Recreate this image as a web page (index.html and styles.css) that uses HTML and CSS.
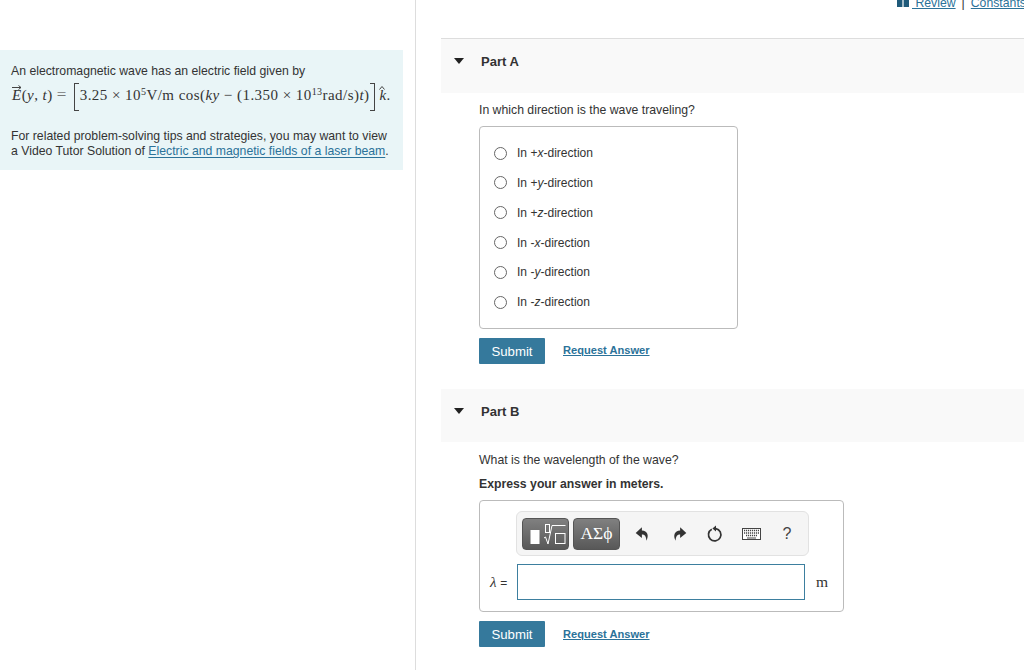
FILE: index.html
```html
<!DOCTYPE html>
<html lang="en">
<head>
    <meta charset="UTF-8">
    <title>Electromagnetic Wave</title>
    <link rel="stylesheet" href="styles.css">
</head>
<body>
    <div class="page">
        <aside class="intro">
            <div class="intro-box">
                <p class="intro-line">An electromagnetic wave has an electric field given by</p>
                <p class="formula"><span class="vec"><i>E</i><svg class="vec-arrow" width="10" height="5" viewBox="0 0 10 5" fill="none" stroke="#444"><path d="M0 2.500h9M6.500 .5L9 2.500 6.500 4.500"/></svg></span>(<i>y</i>, <i>t</i>)<span class="eq">=</span><span class="bracket bracket-left"></span>3.25 &times; 10<sup>5</sup>V/m cos(<i>ky</i> &minus; (1.350 &times; 10<sup>13</sup>rad/s)<i>t</i>)<span class="bracket bracket-right"></span><span class="vec"><i>k</i><svg class="vec-hat" width="6" height="4" viewBox="0 0 6 4" fill="none" stroke="#444"><path d="M.5 3.500L3 .5l2.500 3"/></svg></span>.</p>
                <p class="intro-tip">For related problem-solving tips and strategies, you may want to view<br>a Video Tutor Solution of <a href="#">Electric and magnetic fields of a laser beam</a>.</p>
            </div>
        </aside>
        <main class="questions">
            <div class="top-links">
                <svg class="book" width="12" height="7" viewBox="0 0 12 7"><path d="M0 0h5.400v7H0zM6.600 0H12v7H6.600z"/></svg>
                <a class="review" href="#">&nbsp;Review</a><span class="sep">|</span><a href="#">Constants</a>
            </div>

            <section class="part part-a">
                <div class="part-head">
                    <span class="caret"></span>
                    <h2>Part A</h2>
                </div>
                <div class="part-body">
                    <p class="question">In which direction is the wave traveling?</p>
                    <div class="choices">
                        <label class="choice"><span class="radio"></span>In +<i>x</i>-direction</label>
                        <label class="choice"><span class="radio"></span>In +<i>y</i>-direction</label>
                        <label class="choice"><span class="radio"></span>In +<i>z</i>-direction</label>
                        <label class="choice"><span class="radio"></span>In -<i>x</i>-direction</label>
                        <label class="choice"><span class="radio"></span>In -<i>y</i>-direction</label>
                        <label class="choice"><span class="radio"></span>In -<i>z</i>-direction</label>
                    </div>
                    <div class="actions">
                        <button class="submit">Submit</button>
                        <a class="request" href="#">Request Answer</a>
                    </div>
                </div>
            </section>

            <section class="part part-b">
                <div class="part-head">
                    <span class="caret"></span>
                    <h2>Part B</h2>
                </div>
                <div class="part-body">
                    <p class="question">What is the wavelength of the wave?</p>
                    <p class="instruction">Express your answer in meters.</p>
                    <div class="answer">
                        <div class="toolbar">
                            <button class="tool-btn">
                                <svg width="40" height="26" viewBox="0 0 40 26" fill="none" stroke="#fff">
                                    <rect x="4.500" y="9" width="9" height="14" fill="#fff" stroke="none"/>
                                    <rect x="19.500" y="3.500" width="4" height="8"/>
                                    <path d="M18 17l1.500 -1 2.500 7 4 -18.500h13.500"/>
                                    <rect x="29.500" y="12.500" width="9.500" height="10"/>
                                </svg>
                            </button>
                            <button class="tool-btn tool-greek">&Alpha;&Sigma;&#981;</button>
                            <div class="tool-icons">
                                <svg width="18" height="18" viewBox="0 0 16 16"><path d="M7 2L1.500 7 7 11.500V8.500c2.500 0 3.800 1.300 4 5.500 2.500-5 1-9-4-9.200z"/></svg>
                                <svg class="flip" width="18" height="18" viewBox="0 0 16 16"><path d="M7 2L1.500 7 7 11.500V8.500c2.500 0 3.800 1.300 4 5.500 2.500-5 1-9-4-9.200z"/></svg>
                                <svg width="18" height="18" viewBox="0 0 18 18"><path d="M5.800 4.200a6.200 6.200 0 1 0 4 -.6" fill="none" stroke="#333" stroke-width="1.700"/><path d="M10 .4L6.400 3.500 10 6.600z"/></svg>
                                <svg width="19" height="12" viewBox="0 0 19 12"><rect x=".5" y=".5" width="18" height="11" fill="#fff" stroke="#444"/><path d="M2 2.500h15M2 5h15M4 7.500h11" stroke="#444" stroke-width="1.500" stroke-dasharray="1.200 .8"/><path d="M5 10h9" stroke="#444"/></svg>
                                <span class="help">?</span>
                            </div>
                        </div>
                        <div class="answer-row">
                            <span class="answer-label"><i>&lambda;</i> <span>=</span></span>
                            <input class="answer-input" type="text">
                            <span class="answer-unit">m</span>
                        </div>
                    </div>
                    <div class="actions">
                        <button class="submit">Submit</button>
                        <a class="request" href="#">Request Answer</a>
                    </div>
                </div>
            </section>
        </main>
    </div>
</body>
</html>
```

FILE: styles.css
```css
* {
    box-sizing: border-box;
}
html, body {
    margin: 0;
    height: 100%;
    overflow: hidden;
}
body {
    font-family: "Liberation Sans", Arial, sans-serif;
    font-size: 12.25px;
    color: #333;
    background-color: white;
}
p {
    margin: 0;
}
a {
    color: #2b7299;
}
.page {
    display: flex;
    height: 670px;
}
.intro {
    width: 416px;
    flex-shrink: 0;
    border-right: 1px solid #ddd;
    padding-top: 50px;
}
.intro-box {
    width: 403px;
    height: 120px;
    background-color: #e9f5f7;
    padding: 13px 0 0 11px;
}
.intro-line {
    line-height: 15px;
    padding-top: 1px;
}
.formula {
    font-family: "Liberation Serif", serif;
    font-size: 15px;
    letter-spacing: .45px;
    line-height: 26px;
    margin-top: 3px;
    height: 26px;
    white-space: nowrap;
}
.formula sup {
    font-size: 10px;
    line-height: 0;
    vertical-align: 5px;
}
.eq {
    color: #777;
    font-size: 17px;
    margin: 0 7px 0 4px;
}
.vec {
    position: relative;
    display: inline-block;
    padding-left: 1px;
}
.vec-arrow {
    position: absolute;
    left: 1px;
    top: 3px;
}
.vec-hat {
    position: absolute;
    left: 1px;
    top: 4px;
}
.bracket {
    width: 5px;
    height: 28px;
    border: 1px solid #444;
    display: inline-block;
    vertical-align: middle;
}
.bracket-left {
    border-right: none;
    margin: 0 1px 0 0;
}
.bracket-right {
    border-left: none;
    margin: 0 3px 0 1px;
}
.intro-tip {
    line-height: 15px;
    margin-top: 21px;
}
.intro-tip a {
    text-underline-offset: 2px;
}
.questions {
    flex: 1;
    min-width: 0;
    padding-left: 25px;
}
.top-links {
    height: 38px;
    display: flex;
    align-items: flex-start;
    margin-top: -4px;
    margin-bottom: 4px;
    padding-left: 456px;
    white-space: nowrap;
    line-height: 15px;
    color: #2b7299;
}
.top-links > * {
    flex-shrink: 0;
}
.book {
    fill: #1f5a7a;
    margin-top: 4px;
}
.review {
    margin-left: 3px;
}
.sep {
    color: #333;
    margin: 0 6px;
}
.part-head {
    display: flex;
    align-items: flex-start;
    background-color: #f9f9f9;
    padding: 15px 0 0 13px;
}
.part-a .part-head {
    height: 55px;
    border-top: 1px solid #ddd;
}
.part-b .part-head {
    height: 53px;
}
.caret {
    width: 0;
    height: 0;
    margin-top: 4px;
    border-left: 5.500px solid transparent;
    border-right: 5.500px solid transparent;
    border-top: 6px solid #222;
}
h2 {
    font-size: 13px;
    font-weight: bold;
    line-height: 15px;
    margin: 0 0 0 17px;
}
.part-body {
    padding-left: 38px;
}
.question {
    line-height: 15px;
    padding-top: 10px;
}
.part-a .question {
    height: 24px;
}
.part-b .question {
    padding-top: 11px;
}
.choices {
    width: 259px;
    height: 203px;
    margin-top: 9px;
    padding-top: 11.300px;
    border: 1px solid #bbb;
    border-radius: 4px;
}
.choice {
    display: flex;
    align-items: center;
    height: 29.800px;
    padding-left: 14px;
    font-size: 12.050px;
}
.radio {
    width: 13px;
    height: 13px;
    margin-right: 10px;
    border: 1px solid #666;
    border-radius: 50%;
    background-color: white;
}
.actions {
    display: flex;
    align-items: center;
    margin-top: 9px;
}
.submit {
    width: 66px;
    height: 26px;
    padding: 0;
    border: none;
    border-radius: 1px;
    background-color: #35799c;
    color: white;
    font-family: inherit;
    font-size: 13.200px;
}
.request {
    margin-left: 18px;
    margin-top: -2px;
    font-size: 11.100px;
    font-weight: bold;
}
.part-b .request {
    margin-top: 0;
}
.part-a .actions {
    margin-bottom: 25px;
}
.instruction {
    font-weight: bold;
    line-height: 15px;
    margin-top: 9px;
}
.answer {
    width: 365px;
    height: 112px;
    margin-top: 8px;
    padding: 10px 0 0 36px;
    border: 1px solid #bbb;
    border-radius: 4px;
}
.toolbar {
    display: flex;
    align-items: center;
    width: 293px;
    height: 45px;
    padding-left: 5px;
    background-color: #f5f5f5;
    border: 1px solid #e2e2e2;
    border-radius: 6px;
}
.tool-btn {
    width: 47px;
    height: 32px;
    margin-right: 4px;
    padding: 0;
    display: flex;
    align-items: center;
    justify-content: center;
    border: 1px solid #555;
    border-radius: 4px;
    background: linear-gradient(#808080, #585858);
    color: white;
}
.tool-greek {
    font-family: "Liberation Serif", serif;
    font-size: 17.500px;
}
.tool-icons {
    display: grid;
    grid-auto-flow: column;
    grid-auto-columns: 36px;
    justify-items: center;
    align-items: center;
    margin-left: 1px;
    fill: #333;
}
.flip {
    transform: scaleX(-1);
}
.help {
    font-size: 16px;
    color: #444;
}
.answer-row {
    display: flex;
    align-items: center;
    margin: 8px 0 0 -26px;
}
.answer-label {
    width: 27px;
    font-family: "Liberation Serif", serif;
    font-size: 15px;
    white-space: nowrap;
}
.answer-label span {
    font-family: "Liberation Sans", sans-serif;
    font-size: 12px;
}
.answer-input {
    width: 288px;
    height: 36px;
    border: 1px solid #3d7f9f;
    background-color: white;
}
.answer-unit {
    margin-left: 11px;
    font-family: "Liberation Serif", serif;
    font-size: 15.500px;
}
```
